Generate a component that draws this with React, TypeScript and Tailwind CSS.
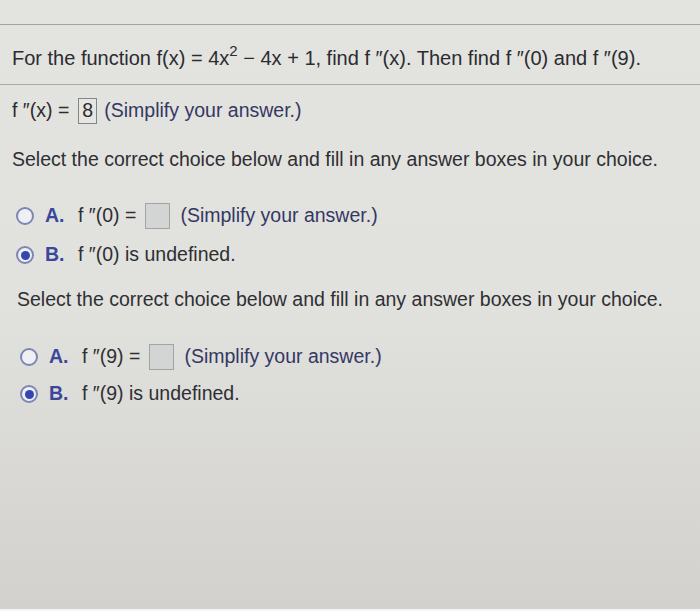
import React from "react";

const FONT = { fontFamily: '"Liberation Sans", Arial, sans-serif' };

function Radio({ checked }: { checked?: boolean }) {
  return (
    <span className="relative inline-flex h-[18px] w-[18px] shrink-0 items-center justify-center rounded-full border-[2px] border-[#7d86b4] bg-[#eef0f4]">
      {checked && <span className="h-[9px] w-[9px] rounded-full bg-[#3446b0]" />}
    </span>
  );
}

function AnswerBox() {
  return <span className="inline-block h-[26px] w-[25px] border border-[#9ea5a3] bg-[#d2d5d3] align-middle" />;
}

function OptionA({ arg, pad }: { arg: string; pad: string }) {
  return (
    <div className={`flex h-[40px] items-center ${pad} text-[19.5px]`}>
      <Radio />
      <span className="ml-[11px] w-[33px] font-bold text-[#3b479a]">A.</span>
      <span className="text-[#2f2f33]">f ″({arg}) =</span>
      <span className="ml-[9px] flex"><AnswerBox /></span>
      <span className="ml-[10px] text-[#343863]">(Simplify your answer.)</span>
    </div>
  );
}

function OptionB({ arg, pad, h }: { arg: string; pad: string; h: string }) {
  return (
    <div className={`flex ${h} items-center ${pad} text-[19.5px]`}>
      <Radio checked />
      <span className="ml-[11px] w-[33px] font-bold text-[#3b479a]">B.</span>
      <span className="text-[#2f2f33]">f ″({arg}) is undefined.</span>
    </div>
  );
}

export default function App() {
  return (
    <div
      className="relative h-[611px] w-[700px] overflow-hidden bg-gradient-to-b from-[#e3e3e0] via-[#e1e1de] to-[#d2d1ce]"
      style={FONT}
    >
      <div className="h-[24px]" />
      <div className="border-t border-[#a3a4a3]" />
      <div className="flex h-[59px] items-center pl-[12px] pt-[6px] text-[20px] text-[#2c2c30]">
        <span>
          For the function f(x) = 4x<sup className="relative -top-[9px] text-[15px]">2</sup> − 4x + 1, find f ″(x). Then find f ″(0) and f ″(9).
        </span>
      </div>
      <div className="border-t border-[#a9aaa9]" />
      <div className="flex h-[52px] items-center pl-[12px] text-[19.5px] text-[#2c2c30]">
        <span>f ″(x) =</span>
        <span className="ml-[9px] inline-flex h-[26px] w-[19px] items-center justify-center border border-[#7f8a88] bg-[#e6e7e4]">8</span>
        <span className="ml-[7px] text-[#343863]">(Simplify your answer.)</span>
      </div>
      <div className="pl-[8px]">
        <div className="flex h-[46px] items-center text-[19.5px] text-[#2f2f33]">
          <span className="ml-[4px]">Select the correct choice below and fill in any answer boxes in your choice.</span>
        </div>
        <div className="h-[13px]" />
        <OptionA arg="0" pad="pl-[8px]" />
        <OptionB arg="0" pad="pl-[8px]" h="h-[38px]" />
        <div className="flex h-[52px] items-center pl-[9px] text-[19.5px] text-[#2f2f33]">
          <span>Select the correct choice below and fill in any answer boxes in your choice.</span>
        </div>
        <div className="h-[11px]" />
        <OptionA arg="9" pad="pl-[12px]" />
        <OptionB arg="9" pad="pl-[12px]" h="h-[34px]" />
      </div>
      <div className="absolute bottom-0 left-0 h-[2px] w-full bg-[#f4f4f2]" />
    </div>
  );
}
